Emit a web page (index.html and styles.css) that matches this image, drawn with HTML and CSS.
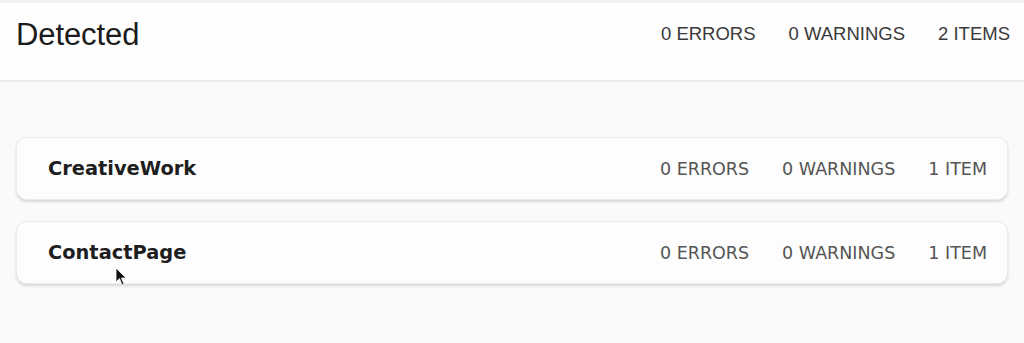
FILE: index.html
```html
<!DOCTYPE html>
<html>
<head>
<meta charset="utf-8">
<link rel="stylesheet" href="styles.css">
</head>
<body>
<div class="topstrip"></div>
<header class="header">
  <h1 class="title">Detected</h1>
  <div class="stats header-stats">
    <span>0 ERRORS</span>
    <span>0 WARNINGS</span>
    <span>2 ITEMS</span>
  </div>
</header>
<main class="list">
  <div class="card">
    <div class="card-title">CreativeWork</div>
    <div class="stats card-stats">
      <span>0 ERRORS</span>
      <span>0 WARNINGS</span>
      <span>1 ITEM</span>
    </div>
  </div>
  <div class="card">
    <div class="card-title">ContactPage</div>
    <div class="stats card-stats">
      <span>0 ERRORS</span>
      <span>0 WARNINGS</span>
      <span>1 ITEM</span>
    </div>
  </div>
</main>
<svg class="cursor" width="14" height="20" viewBox="0 0 14 20"><path d="M1 1 L1 15 L4.5 11.5 L7 18 L9 17 L6.5 11 L11 11 Z" fill="#111" stroke="#fff" stroke-width="0.8"/></svg>
</body>
</html>
```
FILE: styles.css
```css
html, body {
  margin: 0;
  padding: 0;
  background: #fafafa;
  height: 343px;
  overflow: hidden;
}
body {
  position: relative;
  font-family: "Liberation Sans", Arial, sans-serif;
}
.topstrip {
  height: 3px;
  background: #f1f1f1;
}
.header {
  height: 77px;
  background: #fefefe;
  border-bottom: 2px solid #ebebeb;
  display: flex;
  align-items: center;
  justify-content: space-between;
  padding: 0 14px 0 16px;
}
.title {
  margin: 0;
  font-weight: 400;
  font-size: 31px;
  color: #1c1c1c;
  letter-spacing: -0.1px;
  padding-bottom: 14px;
}
.stats {
  display: flex;
}
.header-stats {
  gap: 33px;
  font-size: 18.5px;
  color: #3a3a3a;
  padding-bottom: 16px;
}
.list {
  padding: 55px 16px 0 16px;
  display: flex;
  flex-direction: column;
  gap: 21px;
}
.card {
  height: 63px;
  background: #fdfdfd;
  border: 1px solid #ececec;
  border-radius: 11px;
  box-shadow: 0 2px 3px rgba(0,0,0,0.14);
  display: flex;
  align-items: center;
  justify-content: space-between;
  padding: 0 20px 0 31px;
  box-sizing: border-box;
}
.card-title {
  font-family: "DejaVu Sans", sans-serif;
  font-weight: 700;
  font-size: 19.4px;
  color: #1e1e1e;
}
.card-stats {
  font-family: "DejaVu Sans", sans-serif;
  font-size: 17.5px;
  color: #555555;
  gap: 33px;
}
.cursor {
  position: absolute;
  left: 115px;
  top: 267px;
}
```
